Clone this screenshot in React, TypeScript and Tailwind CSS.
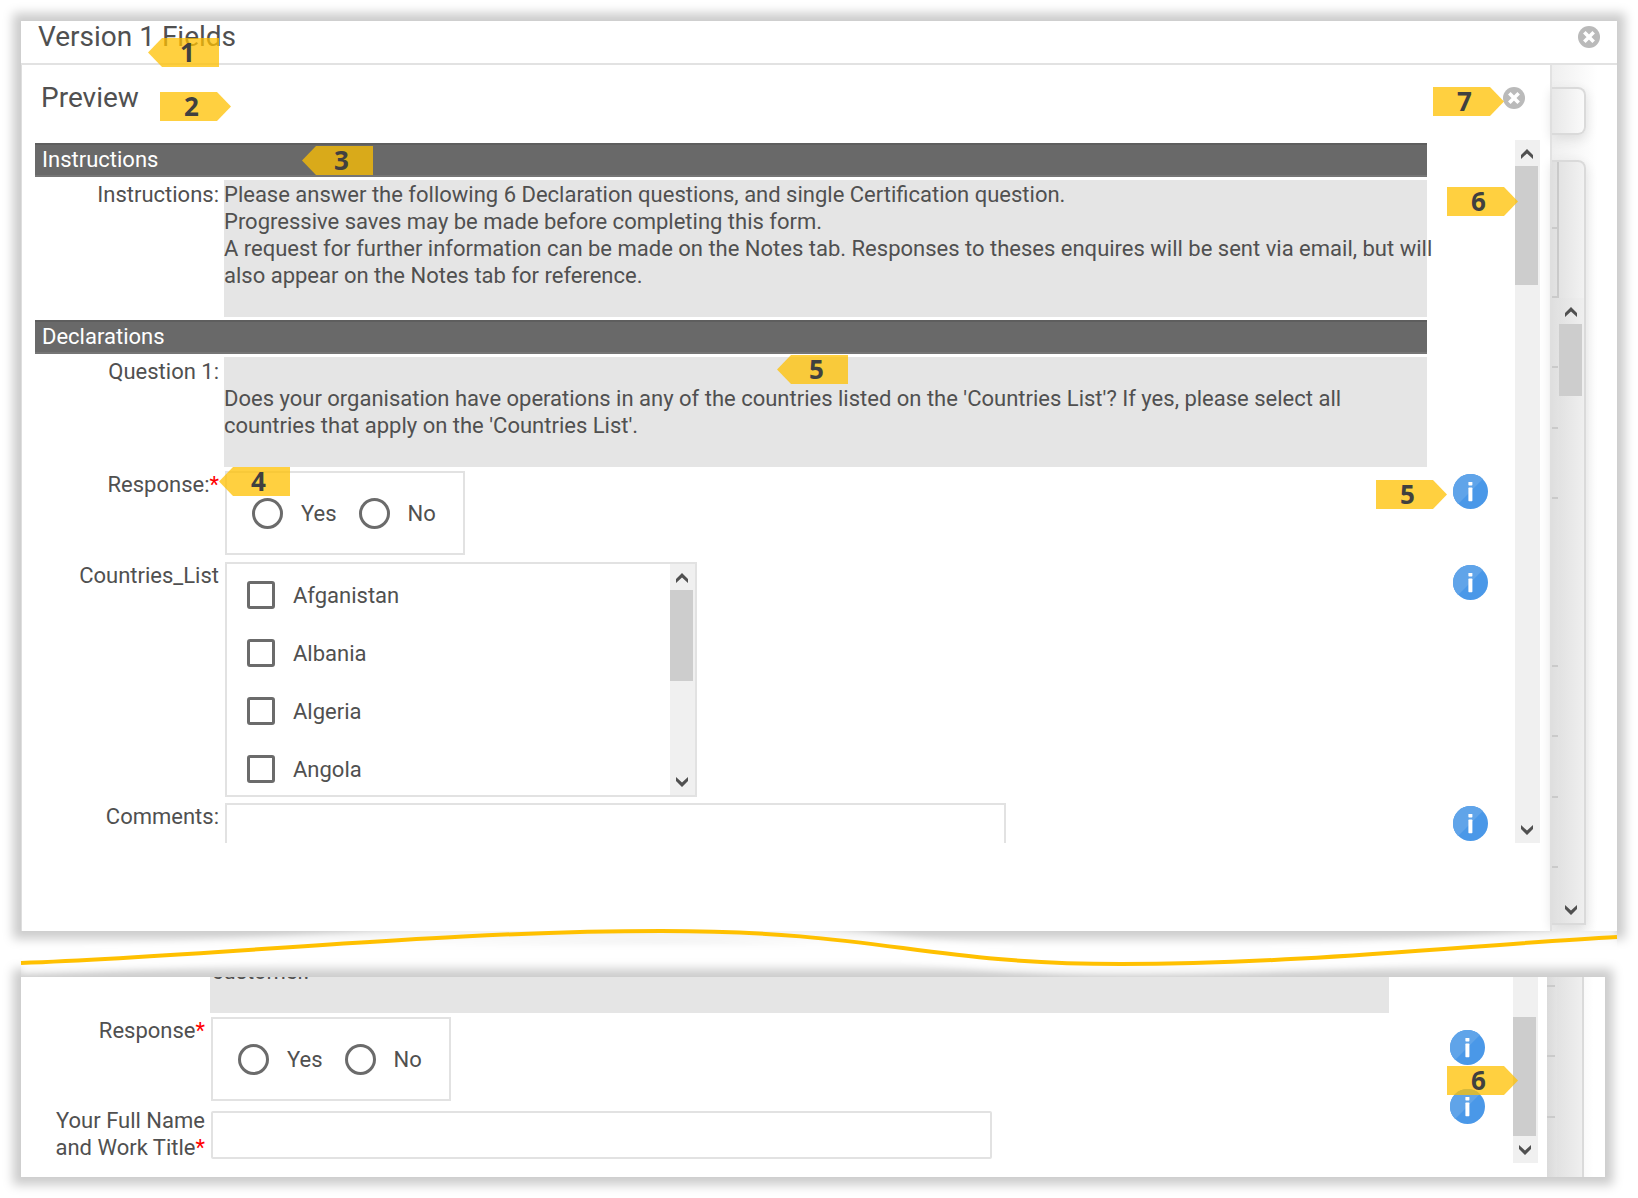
import { useId } from "react";
import clsx from "clsx";

function Callout({ label, dir, className }: { label: string; dir: "left" | "right"; className: string }) {
  return (
    <div
      className={clsx(
        "absolute z-20 flex h-[29px] w-[71px] items-center justify-center bg-[#ffc000]/75 pb-px font-['Open_Sans'] text-[26px] leading-none font-bold text-[#404040]",
        dir === "left"
          ? "pl-2 [clip-path:polygon(0_50%,14px_0,100%_0,100%_100%,14px_100%)]"
          : "pr-2 [clip-path:polygon(0_0,57px_0,100%_50%,57px_100%,0_100%)]",
        className
      )}
    >
      {label}
    </div>
  );
}

function CloseButton() {
  return (
    <button type="button" aria-label="Close" className="size-[22px] shrink-0">
      <svg viewBox="0 0 22 22" className="size-full">
        <circle cx="11" cy="11" r="11" fill="#bababa" />
        <path d="M7.6 7.6l6.8 6.8M14.4 7.6l-6.8 6.8" stroke="#fff" strokeWidth="3.6" strokeLinecap="square" />
      </svg>
    </button>
  );
}

function InfoButton({ className }: { className?: string }) {
  return (
    <button type="button" aria-label="Help" className={clsx("size-[35px] shrink-0", className)}>
      <svg viewBox="0 0 35 35" className="size-full">
        <circle cx="17.5" cy="17.5" r="17.5" fill="#4a98e8" />
        <path d="M29.9 5.1A17.5 17.5 0 1 0 5.1 29.9z" fill="#60a4e9" />
        <rect x="15.4" y="8" width="4" height="3.4" rx="0.6" fill="#fff" />
        <rect x="15.4" y="13.6" width="4" height="13.6" rx="0.6" fill="#fff" />
      </svg>
    </button>
  );
}

function Arrow({ up }: { up?: boolean }) {
  return (
    <svg viewBox="0 0 12 10" className="h-[10px] w-3">
      <path d={up ? "M0 6L6 0l6 6v4L6 4.4 0 10z" : "M0 4l6 6 6-6V0L6 5.6 0 0z"} fill="#505050" />
    </svg>
  );
}

function ScrollBar({ thumb, className }: { thumb: string; className?: string }) {
  return (
    <div className={clsx("flex w-[25px] shrink-0 flex-col bg-[#f0f0f0] pr-0.5", className)}>
      <button type="button" aria-label="Scroll up" className="flex h-[26px] shrink-0 items-center justify-center pt-0.5">
        <Arrow up />
      </button>
      <div className={clsx("bg-[#cdcdcd]", thumb)} />
      <button type="button" aria-label="Scroll down" className="mt-auto flex h-[26px] shrink-0 items-center justify-center">
        <Arrow />
      </button>
    </div>
  );
}

function YesNo({ name }: { name: string }) {
  return (
    <fieldset className="flex h-[84px] w-[240px] border-2 border-[#e2e2e2] pl-[25px]">
      <legend className="sr-only">Response</legend>
      <div className="flex items-center gap-[22px]">
        {["Yes", "No"].map((option) => (
          <label key={option} className="flex items-center gap-[18px]">
            <input
              type="radio"
              name={name}
              className="size-[31px] appearance-none rounded-full border-[3px] border-[#6b6b6b] checked:bg-[#6b6b6b]"
            />
            {option}
          </label>
        ))}
      </div>
    </fieldset>
  );
}

function SectionTitle({ children }: { children: string }) {
  return (
    <h2 className="h-[34px] border-y-2 border-[#5e5e5e] border-b-[#757575] bg-[#696969] pl-[7px] leading-[30px] text-white">
      {children}
    </h2>
  );
}

const countries = ["Afganistan", "Albania", "Algeria", "Angola"];

export default function App() {
  const commentsId = useId();
  const nameId = useId();

  return (
    <div className="relative min-h-screen bg-white pt-[21px] pl-[21px] font-[Roboto] text-[22px] leading-[27px] text-[#505050]">
      <main className="mr-[21px] bg-white shadow-[0_0_10px_8px_#cccccc]">
        <header className="flex h-11 items-start justify-between border-b-2 border-[#e2e2e2] pr-[17px] pl-[17px]">
          <h1 className="text-[28px] leading-8">Version 1 Fields</h1>
          <div className="pt-[5px]">
            <CloseButton />
          </div>
        </header>

        <div className="flex h-[866px]">
          <section className="min-w-0 flex-1 border-l border-[#dedede] pl-[13px]">
            <div className="flex h-[75px] items-start justify-between pr-[25px] pl-1.5">
              <h1 className="pt-[17px] text-[28px] leading-8">Preview</h1>
              <div className="pt-[22px]">
                <CloseButton />
              </div>
            </div>

            <div className="flex h-[703px] pr-2.5">
              <div className="min-w-0 flex-1 overflow-hidden pt-[3px]">
                <div className="mr-[88px]">
                  <SectionTitle>Instructions</SectionTitle>
                  <div className="mt-[3px] flex">
                    <div className="w-[189px] shrink-0 pt-px pr-[5px] text-right">Instructions:</div>
                    <div className="h-[137px] min-w-0 flex-1 bg-[#e5e5e5] pt-px whitespace-nowrap">
                      <p>Please answer the following 6 Declaration questions, and single Certification question.</p>
                      <p>Progressive saves may be made before completing this form.</p>
                      <p>
                        A request for further information can be made on the Notes tab. Responses to theses enquires
                        will be sent via email, but will
                        <br />
                        also appear on the Notes tab for reference.
                      </p>
                    </div>
                  </div>
                  <div className="mt-[3px]">
                    <SectionTitle>Declarations</SectionTitle>
                  </div>
                  <div className="mt-[3px] flex">
                    <div className="w-[189px] shrink-0 pt-px pr-[5px] text-right">Question 1:</div>
                    <div className="h-[110px] flex-1 bg-[#e5e5e5] pt-7">
                      Does your organisation have operations in any of the countries listed on the 'Countries List'? If
                      yes, please select all countries that apply on the 'Countries List'.
                    </div>
                  </div>
                </div>

                <div className="mt-1 flex pr-[27px]">
                  <div className="w-[190px] pr-1.5 text-right">
                    Response:<span className="text-[#ff0000]">*</span>
                  </div>
                  <YesNo name="response-1" />
                  <InfoButton className="mt-[3px] ml-auto" />
                </div>

                <div className="mt-[7px] flex pr-[27px]">
                  <div className="w-[190px] pr-1.5 text-right">Countries_List</div>
                  <div className="flex h-[235px] w-[472px] border-2 border-[#e2e2e2]">
                    <div className="flex-1 overflow-hidden pt-0.5 pl-5">
                      {countries.map((country) => (
                        <label key={country} className="flex h-[58px] items-center gap-[18px]">
                          <input
                            type="checkbox"
                            className="size-7 appearance-none rounded-[3px] border-[3px] border-[#6b6b6b] checked:bg-[#6b6b6b]"
                          />
                          {country}
                        </label>
                      ))}
                    </div>
                    <ScrollBar thumb="h-[91px]" />
                  </div>
                  <InfoButton className="mt-[3px] ml-auto" />
                </div>

                <div className="mt-1.5 flex pr-[27px]">
                  <label htmlFor={commentsId} className="w-[190px] pr-1.5 text-right">
                    Comments:
                  </label>
                  <textarea id={commentsId} className="h-24 w-[781px] resize-none border-2 border-[#e2e2e2]" />
                  <InfoButton className="mt-[3px] ml-auto" />
                </div>
              </div>
              <ScrollBar thumb="h-[119px]" />
            </div>
          </section>

          <aside className="w-[67px] shrink-0 border-l-2 border-[#e2e2e2] bg-linear-to-r from-[#efefef] to-white to-70% pt-[22px] pr-[31px]">
            <div className="h-12 rounded-r-lg border-2 border-l-0 border-[#dadada] bg-linear-to-r from-[#e8e8e8] to-[#fafafa] shadow-[0_4px_12px_#dcdcdc]" />
            <div className="mt-[25px] h-[765px] overflow-hidden rounded-tr-lg border-2 border-l-0 border-[#dadada] bg-linear-to-r from-[#dfdfdf] to-[#f2f2f2] shadow-[0_4px_12px_#dcdcdc]">
              <div className="h-[136px] w-[7px] border-r-2 border-b-2 border-[#cacaca] pt-[65px]">
                <div className="h-0.5 bg-[#cacaca]" />
              </div>
              <div className="flex h-[625px]">
                <div className="w-[7px] pt-[68px]">
                  <div className="h-[61px] w-1.5 border-t-2 border-[#cacaca]" />
                  <div className="h-[70px] w-1.5 border-t-2 border-[#cacaca]" />
                  <div className="h-[168px] w-1.5 border-t-2 border-[#cacaca]" />
                  <div className="h-[70px] w-1.5 border-t-2 border-[#cacaca]" />
                  <div className="h-[61px] w-1.5 border-t-2 border-[#cacaca]" />
                  <div className="h-[70px] w-1.5 border-t-2 border-[#cacaca]" />
                  <div className="w-1.5 border-t-2 border-[#cacaca]" />
                </div>
                <ScrollBar thumb="h-[72px] bg-[#c8c8c8]" className="bg-linear-to-r from-[#e2e2e2] to-[#efefef]" />
              </div>
            </div>
          </aside>
        </div>
      </main>

      <svg
        viewBox="0 0 1596 46"
        preserveAspectRatio="none"
        className="relative z-10 block h-[46px] w-[calc(100%-21px)] overflow-visible"
      >
        <defs>
          <filter id="glow" filterUnits="userSpaceOnUse" x="-20" y="-20" width="1640" height="90">
            <feGaussianBlur stdDeviation="3" />
          </filter>
          <clipPath id="gap">
            <rect x="0" y="0" width="1596" height="46" />
          </clipPath>
        </defs>
        <g clipPath="url(#gap)">
          <path
            d="M0 32C210 24 420 0 640 0S900 33 1100 33C1280 33 1450 14 1596 6"
            fill="none"
            stroke="#fff"
            strokeOpacity="0.75"
            strokeWidth="22"
            filter="url(#glow)"
          />
        </g>
        <path
          d="M0 32C210 24 420 0 640 0S900 33 1100 33C1280 33 1450 14 1596 6"
          fill="none"
          stroke="#ffc000"
          strokeWidth="4"
        />
      </svg>

      <section className="mr-[33px] flex h-[200px] bg-white shadow-[0_0_10px_8px_#cccccc]">
        <div className="flex min-w-0 flex-1 pr-[9px]">
          <div className="min-w-0 flex-1">
            <div className="mr-[124px] ml-[189px] flex h-9 items-start overflow-hidden bg-[#e5e5e5] pl-0.5">
              <span className="-mt-[19px]">customer.</span>
            </div>
            <div className="mt-1 flex pr-[28px]">
              <div className="w-[190px] pr-1.5 text-right">
                Response<span className="text-[#ff0000]">*</span>
              </div>
              <YesNo name="response-2" />
              <InfoButton className="mt-[13px] ml-auto" />
            </div>
            <div className="mt-1.5 flex items-start pr-[28px]">
              <label htmlFor={nameId} className="w-[190px] pr-1.5 pl-4 text-right">
                Your Full Name and Work Title<span className="text-[#ff0000]">*</span>
              </label>
              <input id={nameId} type="text" className="mt-1 h-12 w-[781px] rounded-xs border-2 border-[#e2e2e2] px-2" />
              <InfoButton className="-mt-[18px] ml-auto" />
            </div>
          </div>
          <div className="flex h-[186px] w-[25px] flex-col bg-[#f0f0f0] pr-0.5">
            <div className="mt-10 h-[119px] bg-[#cdcdcd]" />
            <button type="button" aria-label="Scroll down" className="mt-auto flex h-[26px] items-center justify-center">
              <Arrow />
            </button>
          </div>
        </div>
        <div className="flex w-[58px] shrink-0 bg-linear-to-r from-[#e4e4e4] to-white to-80%">
          <div className="w-2.5 bg-linear-to-r from-[#dadada] to-[#e4e4e4] pt-2">
            <div className="h-[70px] w-2 border-t-2 border-[#cacaca]" />
            <div className="h-[61px] w-2 border-t-2 border-[#cacaca]" />
            <div className="w-2 border-t-2 border-[#cacaca]" />
          </div>
          <div className="w-[27px] border-r-2 border-[#dadada] bg-linear-to-r from-[#e2e2e2] to-[#efefef]" />
        </div>
      </section>

      <Callout label="1" dir="left" className="top-[38px] left-[148px]" />
      <Callout label="2" dir="right" className="top-[92px] left-[160px]" />
      <Callout label="3" dir="left" className="top-[146px] left-[302px]" />
      <Callout label="4" dir="left" className="top-[467px] left-[219px]" />
      <Callout label="5" dir="left" className="top-[355px] left-[777px]" />
      <Callout label="5" dir="right" className="top-[480px] right-[191px]" />
      <Callout label="6" dir="right" className="top-[187px] right-[120px]" />
      <Callout label="7" dir="right" className="top-[87px] right-[134px]" />
      <Callout label="6" dir="right" className="top-[1066px] right-[120px]" />
    </div>
  );
}
